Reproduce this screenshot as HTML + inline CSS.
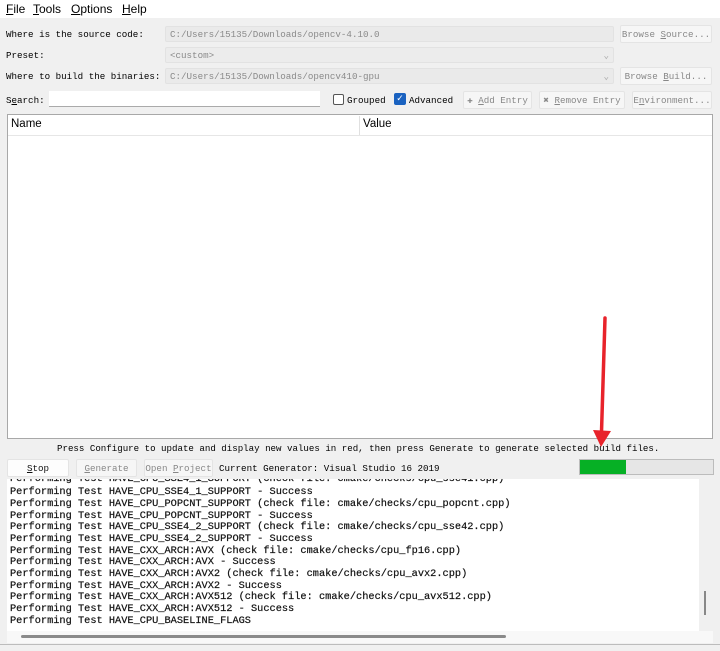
<!DOCTYPE html>
<html><head><meta charset="utf-8"><style>
*{margin:0;padding:0;box-sizing:border-box}
body{width:720px;height:651px;background:#f0f0f0;position:relative;overflow:hidden;font-family:"Liberation Mono",monospace;font-size:9.2px;color:#000}
.a{position:absolute;white-space:pre}
.menu{position:absolute;left:0;top:0;width:720px;height:18px;background:#fff;font-family:"Liberation Sans",sans-serif;font-size:12px}
.menu span{position:absolute;top:2px}
.fld{position:absolute;background:#eaeaea;border:1px solid #e2e2e2;color:#8a8a8a;padding-left:4px;line-height:15px;border-radius:2px}
.btn{position:absolute;background:#f6f6f6;border:1px solid #e4e4e4;color:#888;text-align:center;line-height:17px;border-radius:2px}
.log{position:absolute;left:7px;top:479px;width:692px;height:152px;background:#fff;overflow:hidden}
.log div{position:absolute;left:3px;font-size:10.3px;white-space:pre;color:#111;line-height:12px;-webkit-text-stroke:0.2px #111}
</style></head><body>
<div class="menu"><span style="left:6px"><u>F</u>ile</span><span style="left:33px"><u>T</u>ools</span><span style="left:71px"><u>O</u>ptions</span><span style="left:122px"><u>H</u>elp</span></div>
<div class="a" style="left:6px;top:29px">Where is the source code:</div>
<div class="fld" style="left:165px;top:26px;width:449px;height:16px">C:/Users/15135/Downloads/opencv-4.10.0</div>
<div class="btn" style="left:620px;top:25px;width:92px;height:18px">Browse <u>S</u>ource...</div>
<div class="a" style="left:6px;top:50px">Preset:</div>
<div class="fld" style="left:165px;top:47px;width:449px;height:16px;background:#ececec">&lt;custom&gt;<span style="position:absolute;right:4px;color:#aaa">⌄</span></div>
<div class="a" style="left:6px;top:71px">Where to build the binaries:</div>
<div class="fld" style="left:165px;top:68px;width:449px;height:16px">C:/Users/15135/Downloads/opencv410-gpu<span style="position:absolute;right:4px;color:#aaa">⌄</span></div>
<div class="btn" style="left:620px;top:67px;width:92px;height:18px">Browse <u>B</u>uild...</div>
<div class="a" style="left:6px;top:95px">S<u>e</u>arch:</div>
<div style="position:absolute;left:49px;top:91px;width:271px;height:16px;background:#fff;border-bottom:1px solid #aaa"></div>
<div style="position:absolute;left:333px;top:94px;width:11px;height:11px;border:1px solid #555;border-radius:2px;background:#fff"></div>
<div class="a" style="left:347px;top:95px">Grouped</div>
<div style="position:absolute;left:394px;top:93px;width:12px;height:12px;background:#1a62c0;border-radius:2px;color:#fff;font-size:9px;line-height:12px;text-align:center;font-family:'DejaVu Sans'">✓</div>
<div class="a" style="left:409px;top:95px">Advanced</div>
<div class="btn" style="left:463px;top:91px;width:69px;height:18px">✚ <u>A</u>dd Entry</div>
<div class="btn" style="left:539px;top:91px;width:86px;height:18px">✖ <u>R</u>emove Entry</div>
<div class="btn" style="left:632px;top:91px;width:80px;height:18px">E<u>n</u>vironment...</div>
<div style="position:absolute;left:7px;top:114px;width:706px;height:325px;background:#fff;border:1px solid #a8a8a8"></div>
<div style="position:absolute;left:8px;top:115px;width:704px;height:21px;border-bottom:1px solid #e6e6e6"></div>
<div style="position:absolute;left:359px;top:116px;width:1px;height:19px;background:#e0e0e0"></div>
<div class="a" style="left:11px;top:118px;font-family:'Liberation Sans',sans-serif;font-size:11.5px">Name</div>
<div class="a" style="left:363px;top:118px;font-family:'Liberation Sans',sans-serif;font-size:11.5px">Value</div>
<div class="a" style="left:57px;top:443px;font-size:9.15px">Press Configure to update and display new values in red, then press Generate to generate selected build files.</div>
<div class="btn" style="left:7px;top:459px;width:62px;height:18px;background:#fdfdfd;color:#111"><u>S</u>top</div>
<div class="btn" style="left:76px;top:459px;width:61px;height:18px"><u>G</u>enerate</div>
<div class="btn" style="left:144px;top:459px;width:69px;height:18px">Open <u>P</u>roject</div>
<div class="a" style="left:219px;top:463px">Current Generator: Visual Studio 16 2019</div>
<div style="position:absolute;left:579px;top:459px;width:135px;height:16px;background:#e6e6e6;border:1px solid #bcbcbc"></div>
<div style="position:absolute;left:580px;top:460px;width:46px;height:14px;background:#06b025"></div>
<div class="log">
<div style="top:-6px">Performing Test HAVE_CPU_SSE4_1_SUPPORT (check file: cmake/checks/cpu_sse41.cpp)</div>
<div style="top:7px">Performing Test HAVE_CPU_SSE4_1_SUPPORT - Success</div>
<div style="top:19px">Performing Test HAVE_CPU_POPCNT_SUPPORT (check file: cmake/checks/cpu_popcnt.cpp)</div>
<div style="top:30.5px">Performing Test HAVE_CPU_POPCNT_SUPPORT - Success</div>
<div style="top:42px">Performing Test HAVE_CPU_SSE4_2_SUPPORT (check file: cmake/checks/cpu_sse42.cpp)</div>
<div style="top:54px">Performing Test HAVE_CPU_SSE4_2_SUPPORT - Success</div>
<div style="top:65.5px">Performing Test HAVE_CXX_ARCH:AVX (check file: cmake/checks/cpu_fp16.cpp)</div>
<div style="top:77px">Performing Test HAVE_CXX_ARCH:AVX - Success</div>
<div style="top:89px">Performing Test HAVE_CXX_ARCH:AVX2 (check file: cmake/checks/cpu_avx2.cpp)</div>
<div style="top:100.5px">Performing Test HAVE_CXX_ARCH:AVX2 - Success</div>
<div style="top:112px">Performing Test HAVE_CXX_ARCH:AVX512 (check file: cmake/checks/cpu_avx512.cpp)</div>
<div style="top:124px">Performing Test HAVE_CXX_ARCH:AVX512 - Success</div>
<div style="top:135.5px">Performing Test HAVE_CPU_BASELINE_FLAGS</div>
</div>
<div style="position:absolute;left:704px;top:591px;width:2px;height:24px;background:#888"></div>
<div style="position:absolute;left:7px;top:631px;width:706px;height:12px;background:#f8f8f8"></div>
<div style="position:absolute;left:21px;top:635px;width:485px;height:3px;background:#8a8a8a;border-radius:2px"></div>
<div style="position:absolute;left:0;top:644px;width:720px;height:1px;background:#bcbcbc"></div>
<svg style="position:absolute;left:0;top:0" width="720" height="651"><line x1="605" y1="318" x2="601.5" y2="432" stroke="#e8232b" stroke-width="3.5" stroke-linecap="round"/><polygon points="593,430 611,431 601,447" fill="#e8232b"/></svg>
</body></html>
